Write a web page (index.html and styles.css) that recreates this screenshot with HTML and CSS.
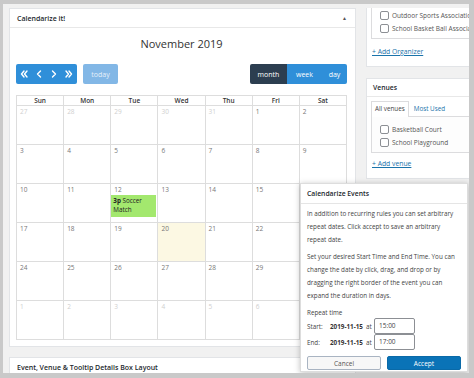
FILE: index.html
```html
<!DOCTYPE html>
<html>
<head>
<meta charset="utf-8">
<link rel="stylesheet" href="styles.css">
</head>
<body>
<div class="frame">
  <div class="main">
    <div class="postbox cal-box">
      <div class="pb-head"><span>Calendarize it!</span><span class="toggle">▲</span></div>
      <div class="cal">
        <div class="cal-title">November 2019</div>
        <div class="toolbar">
          <div class="tb-left">
            <div class="btn-group">
              <button class="btn ico"><svg width="8" height="8" viewBox="0 0 8 8"><polyline points="4,1 1.5,4 4,7" /><polyline points="7,1 4.5,4 7,7" /></svg></button>
              <button class="btn ico"><svg width="8" height="8" viewBox="0 0 8 8"><polyline points="5.5,1 2.5,4 5.5,7" /></svg></button>
              <button class="btn ico"><svg width="8" height="8" viewBox="0 0 8 8"><polyline points="2.5,1 5.5,4 2.5,7" /></svg></button>
              <button class="btn ico"><svg width="8" height="8" viewBox="0 0 8 8"><polyline points="1,1 3.5,4 1,7" /><polyline points="4,1 6.5,4 4,7" /></svg></button>
            </div>
            <button class="btn today">today</button>
          </div>
          <div class="btn-group">
            <button class="btn view active">month</button>
            <button class="btn view">week</button>
            <button class="btn view">day</button>
          </div>
        </div>
        <div class="grid">
          <div class="hd">Sun</div><div class="hd">Mon</div><div class="hd">Tue</div><div class="hd">Wed</div><div class="hd">Thu</div><div class="hd">Fri</div><div class="hd">Sat</div>
          <div class="day other"><span>27</span></div><div class="day other"><span>28</span></div><div class="day other"><span>29</span></div><div class="day other"><span>30</span></div><div class="day other"><span>31</span></div><div class="day"><span>1</span></div><div class="day"><span>2</span></div>
          <div class="day"><span>3</span></div><div class="day"><span>4</span></div><div class="day"><span>5</span></div><div class="day"><span>6</span></div><div class="day"><span>7</span></div><div class="day"><span>8</span></div><div class="day"><span>9</span></div>
          <div class="day"><span>10</span></div><div class="day"><span>11</span></div><div class="day"><span>12</span><div class="event"><b>3p</b> Soccer Match</div></div><div class="day"><span>13</span></div><div class="day"><span>14</span></div><div class="day"><span>15</span></div><div class="day"><span>16</span></div>
          <div class="day"><span>17</span></div><div class="day"><span>18</span></div><div class="day"><span>19</span></div><div class="day today-cell"><span>20</span></div><div class="day"><span>21</span></div><div class="day"><span>22</span></div><div class="day"><span>23</span></div>
          <div class="day"><span>24</span></div><div class="day"><span>25</span></div><div class="day"><span>26</span></div><div class="day"><span>27</span></div><div class="day"><span>28</span></div><div class="day"><span>29</span></div><div class="day"><span>30</span></div>
          <div class="day other"><span>1</span></div><div class="day other"><span>2</span></div><div class="day other"><span>3</span></div><div class="day other"><span>4</span></div><div class="day other"><span>5</span></div><div class="day other"><span>6</span></div><div class="day other"><span>7</span></div>
        </div>
      </div>
    </div>
    <div class="postbox second">
      <div class="pb-head"><span>Event, Venue &amp; Tooltip Details Box Layout</span></div>
    </div>
  </div>
  <div class="side">
    <div class="panel org">
      <div class="checklist top">
        <label class="chk"><span class="box"></span>Outdoor Sports Association</label>
        <label class="chk"><span class="box"></span>School Basket Ball Association</label>
      </div>
      <a class="add">+ Add Organizer</a>
    </div>
    <div class="panel venues">
      <div class="panel-head">Venues</div>
      <div class="panel-body">
        <div class="tabs"><span class="tab active">All venues</span><span class="tab link">Most Used</span></div>
        <div class="checklist">
          <label class="chk"><span class="box"></span>Basketball Court</label>
          <label class="chk"><span class="box"></span>School Playground</label>
        </div>
        <a class="add">+ Add venue</a>
      </div>
    </div>
  </div>
  <div class="popup">
    <div class="pop-head">Calendarize Events</div>
    <div class="pop-body">
      <p>In addition to recurring rules you can set arbitrary repeat dates. Click accept to save an arbitrary repeat date.</p>
      <p>Set your desired Start Time and End Time. You can change the date by click, drag, and drop or by dragging the right border of the event you can expand the duration in days.</p>
      <div class="rt-label">Repeat time</div>
      <div class="rt-row"><span class="rt-k">Start:</span><b class="rt-d">2019-11-15</b><span class="rt-at">at</span><span class="inp">15:00</span></div>
      <div class="rt-row"><span class="rt-k">End:</span><b class="rt-d">2019-11-15</b><span class="rt-at">at</span><span class="inp">17:00</span></div>
      <div class="pop-btns"><button class="pbtn cancel">Cancel</button><button class="pbtn accept">Accept</button></div>
    </div>
  </div>
</div>
</body>
</html>
```

FILE: styles.css
```css
* { box-sizing: border-box; }
html, body { margin: 0; padding: 0; }
body {
  width: 474px; height: 378px; overflow: hidden;
  background: #c9c9c9;
  font-family: "Open Sans", "Noto Sans", sans-serif;
  color: #333;
}
.frame {
  position: relative;
  margin: 4px 5px 0 3px;
  height: 369px;
  background: #f1f1f1;
  display: flex;
  gap: 10px;
  padding: 4px 0 0 6px;
  overflow: hidden;
}
.main { width: 347px; display: flex; flex-direction: column; gap: 10px; }
.postbox { background: #fff; border: 1px solid #e2e4e7; }
.pb-head {
  height: 19px; border-bottom: 1px solid #e8e8e8;
  display: flex; align-items: center; justify-content: space-between;
  padding: 0 8px 0 7px;
  font-size: 7px; font-weight: 600; color: #23282d;
}
.toggle { font-size: 5px; color: #555; }
.cal { padding: 0 8px 6px 6px; }
.cal-title { text-align: center; font-size: 11px; color: #333; padding-top: 9px; height: 36px; line-height: 14px; }
.toolbar { display: flex; justify-content: space-between; align-items: center; height: 20px; margin-bottom: 11px; }
.tb-left { display: flex; gap: 6px; }
.btn-group { display: flex; border-radius: 2px; overflow: hidden; }
.btn {
  border: 0; margin: 0; padding: 0; height: 20px;
  font-family: inherit; font-size: 7px; color: #fff;
  background: #2f8fd9;
  display: flex; align-items: center; justify-content: center;
}
.btn.ico { width: 15.25px; }
.btn.ico svg { fill: none; stroke: #fff; stroke-width: 1.4; stroke-linecap: round; stroke-linejoin: round; }
.btn.today { width: 35px; background: #82b7e6; color: #e6f0fa; border-radius: 2px; }
.btn.view { padding: 0; }
.btn.view:nth-child(1) { width: 37px; }
.btn.view:nth-child(2) { width: 35px; }
.btn.view:nth-child(3) { width: 25px; }
.btn.active { background: #2c3e50; }
.grid {
  display: grid;
  grid-template-columns: repeat(7, 1fr);
  grid-template-rows: 10px repeat(6, 39px);
  border-top: 1px solid #ddd; border-left: 1px solid #ddd;
}
.grid > div { border-right: 1px solid #ddd; border-bottom: 1px solid #ddd; }
.hd { font-size: 6.5px; font-weight: 600; text-align: center; line-height: 9px; color: #333; }
.day { font-size: 6.5px; color: #777; padding: 1px 0 0 0; min-width: 0; }
.day > span { display: block; padding-left: 3px; height: 9px; line-height: 9px; }
.day.other { color: #cfcfcf; }
.today-cell { background: #fcf8e3; }
.event {
  margin: 1px 1px 0 0; background: #a3e86e; color: #222;
  font-size: 6.3px; line-height: 9px; padding: 1px 2px; height: 22px;
}
.event b { font-weight: 700; }
.second .pb-head { border-bottom: 0; height: 18px; }
.side { width: 103px; overflow: hidden; display: flex; flex-direction: column; gap: 11px; }
.panel { width: 130px; background: #fff; border: 1px solid #e2e4e7; }
.org { margin-top: 0; height: 59px; border-top: 0; padding: 0 0 0 4px; }
.checklist { border: 1px solid #dcdcde; background: #fff; padding: 4px 0 5px 8px; display: flex; flex-direction: column; gap: 4px; }
.checklist.top { border-top: 0; height: 31px; padding-top: 3px; }
.chk { display: flex; align-items: center; font-size: 6.5px; color: #555; white-space: nowrap; height: 9px; }
.box { width: 9px; height: 9px; border: 1px solid #8c8f94; border-radius: 2px; background: #fff; margin-right: 3px; flex: none; }
.add { display: block; font-size: 6.8px; color: #1a73aa; text-decoration: underline; padding: 8px 0 0 1px; height: 20px; }
.venues { height: 101px; }
.panel-head { height: 18px; border-bottom: 1px solid #e8e8e8; font-size: 6.8px; font-weight: 600; color: #23282d; display: flex; align-items: center; padding-left: 6px; }
.panel-body { padding: 4px 0 0 4px; }
.tabs { display: flex; align-items: flex-end; height: 15px; font-size: 6.3px; }
.tab { padding: 0 3px; line-height: 14px; }
.tab.active { border: 1px solid #dcdcde; border-bottom: 0; background: #fff; color: #444; height: 16px; margin-bottom: -1px; position: relative; }
.tab.link { color: #1a73aa; padding-left: 5px; }
.venues .checklist { background: #fdfdfd; height: 37px; padding-top: 8px; }
.venues .add { padding-top: 6px; }
.popup {
  position: absolute; left: 297px; top: 179px; width: 168px; height: 189px;
  background: #fff; border: 1px solid #ddd;
  box-shadow: 0 1px 6px rgba(0,0,0,0.25);
}
.pop-head { height: 20px; border-bottom: 1px solid #e5e5e5; font-size: 6.8px; font-weight: 600; color: #23282d; display: flex; align-items: center; padding-left: 6px; }
.pop-body { padding: 3px 6px 0 6px; font-size: 6.3px; color: #444; }
.pop-body p { margin: 0 0 4px 0; line-height: 13px; }
.rt-label { line-height: 11px; margin-top: 5px; }
.rt-row { display: flex; align-items: center; height: 16px; }
.rt-k { width: 23px; }
.rt-d { font-weight: 700; color: #333; width: 36px; }
.rt-at { width: 8px; }
.inp { width: 41px; height: 16px; border: 1px solid #8c8f94; border-radius: 2px; padding-left: 4px; line-height: 14px; font-size: 6.5px; }
.pop-btns { display: flex; justify-content: space-between; margin-top: 6px; }
.pbtn { width: 74px; height: 14px; border-radius: 2px; font-family: inherit; font-size: 6.5px; padding: 0; }
.cancel { background: #f7f7f7; border: 1px solid #a9b4c2; color: #555; }
.accept { background: #0a73b7; border: 1px solid #0a6aa8; color: #fff; }
```
